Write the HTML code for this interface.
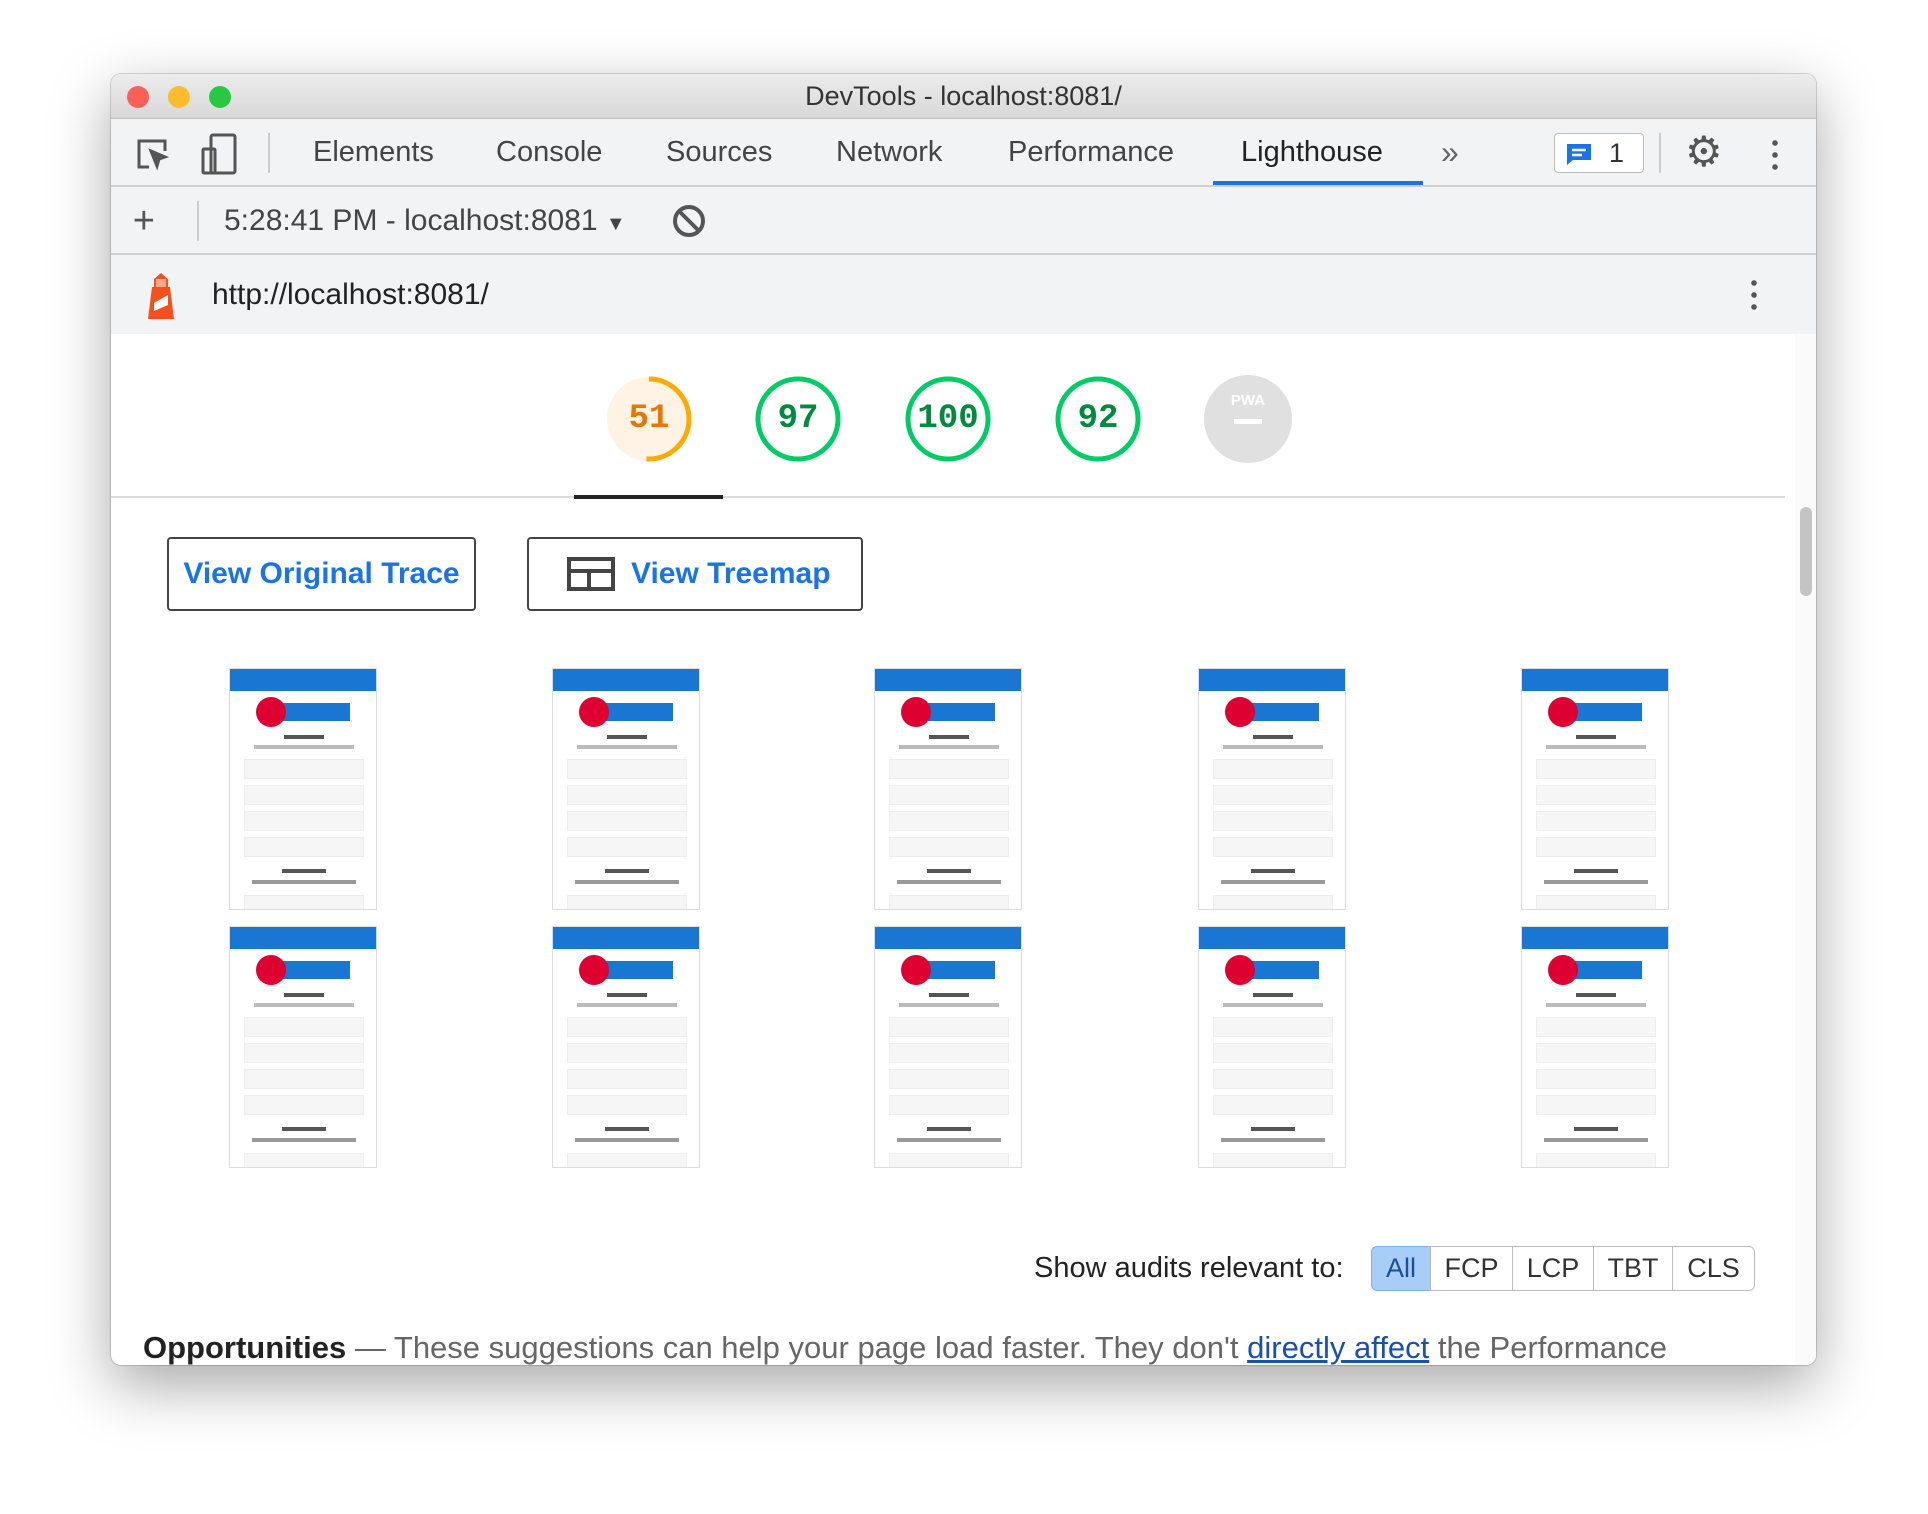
<!DOCTYPE html>
<html><head><meta charset="utf-8"><style>
*{box-sizing:border-box;margin:0;padding:0}
body{width:1928px;height:1514px;background:#fff;font-family:"Liberation Sans",sans-serif;position:relative;overflow:hidden}
.win{position:absolute;left:111px;top:74px;width:1705px;height:1291px;border-radius:10px;overflow:hidden;box-shadow:0 20px 60px rgba(0,0,0,.35),0 0 0 1px rgba(0,0,0,.15);background:#fff}
.title{position:absolute;left:0;top:0;width:100%;height:45px;background:linear-gradient(#ececec,#d8d8d8);border-bottom:1px solid #bdbdbd;text-align:center;font-size:27px;line-height:45px;color:#333}
.dot{position:absolute;top:12px;width:22px;height:22px;border-radius:50%}
.tabs{position:absolute;left:0;top:45px;width:100%;height:68px;background:#f1f3f4;border-bottom:2px solid #cfcfcf}
.tab{position:absolute;top:0;line-height:66px;font-size:29px;color:#444}
.bar2{position:absolute;left:0;top:113px;width:100%;height:68px;background:#f1f3f4;border-bottom:2px solid #cfcfcf;font-size:29px;color:#444}
.bar3{position:absolute;left:0;top:181px;width:100%;height:79px;background:#f1f3f4;font-size:29px;color:#222}
.score{position:absolute;top:301px;width:88px;height:88px}
.score svg{position:absolute;left:0;top:0}
.score span{position:absolute;left:0;top:0;width:88px;height:88px;text-align:center;font-weight:bold;font-family:"Liberation Mono",monospace;font-size:34px;line-height:88px}
.btn{position:absolute;top:463px;height:74px;border:2px solid #444;border-radius:4px;color:#1a73e8;font-weight:bold;font-size:30px;line-height:70px;text-align:center;background:#fff}
.th{position:absolute;width:148px;height:242px;background:#fff;border:1px solid #ddd;overflow:hidden}
.th .h{height:22px;background:#1976d2}
.th .r{position:absolute;left:26px;top:28px;width:30px;height:30px;border-radius:50%;background:#dd0031}
.th .b{position:absolute;left:45px;top:34px;width:75px;height:18px;background:#1976d2}
.th .l{position:absolute;left:14px;width:120px;height:20px;background:#f6f6f6;border:1px solid #eee}
.th .t{position:absolute;height:4px;background:#999}
.seg{position:absolute;top:1172px;height:45px;border:1px solid #bbb;font-size:27px;line-height:43px;text-align:center;color:#333;background:#fff}
</style></head><body>
<div class="win">
 <div class="title">DevTools - localhost:8081/
  <div class="dot" style="left:16px;background:#fc5f57"></div><div class="dot" style="left:57px;background:#fdbc2e"></div><div class="dot" style="left:98px;background:#28c840"></div>
 </div>
 <div class="tabs">
  <svg style="position:absolute;left:24px;top:18px" width="36" height="36" viewBox="0 0 36 36" fill="none" stroke="#555" stroke-width="3"><path d="M14 30H4V4h26v10"/><path d="M16 14l14 6-6 2-2 7z" fill="#555"/></svg>
  <svg style="position:absolute;left:90px;top:14px" width="36" height="42" viewBox="0 0 36 42" fill="none" stroke="#555" stroke-width="3"><rect x="10" y="2" width="24" height="38" rx="2"/><rect x="2" y="16" width="12" height="24" rx="1"/></svg>
  <div style="position:absolute;left:157px;top:14px;width:2px;height:40px;background:#ccc"></div>
  <div class="tab" style="left:202px">Elements</div>
  <div class="tab" style="left:385px">Console</div>
  <div class="tab" style="left:555px">Sources</div>
  <div class="tab" style="left:725px">Network</div>
  <div class="tab" style="left:897px">Performance</div>
  <div class="tab" style="left:1130px;color:#222">Lighthouse</div>
  <div style="position:absolute;left:1102px;top:62px;width:210px;height:4px;background:#1a73e8"></div>
  <div class="tab" style="left:1330px;font-size:32px;color:#666">»</div>
  <div style="position:absolute;left:1443px;top:14px;width:90px;height:40px;border:1px solid #bbb;border-radius:4px;background:#fff;font-size:27px;line-height:38px;color:#333"><svg style="position:absolute;left:10px;top:8px" width="28" height="24" viewBox="0 0 28 24"><path d="M2 2h24v16H8l-6 5z" fill="#1a73e8"/><path d="M7 8h14M7 13h10" stroke="#fff" stroke-width="2.5"/></svg><span style="position:absolute;left:54px">1</span></div>
  <div style="position:absolute;left:1548px;top:14px;width:2px;height:40px;background:#ccc"></div>
  <div style="position:absolute;left:1574px;top:8px;font-size:42px;color:#555">⚙</div>
  <div style="position:absolute;left:1661px;top:18px;width:6px;height:34px;background:radial-gradient(circle,#555 2.5px,transparent 3px) 0 0/6px 12px"></div>
 </div>
 <div class="bar2">
  <div style="position:absolute;left:0;top:14px;width:44px;font-size:38px;text-align:right;line-height:40px;color:#555">+</div>
  <div style="position:absolute;left:86px;top:14px;width:2px;height:40px;background:#ccc"></div>
  <div style="position:absolute;left:113px;line-height:68px;font-size:30px">5:28:41 PM - localhost:8081 <span style="font-size:20px">▼</span></div>
  <svg style="position:absolute;left:561px;top:17px" width="34" height="34" viewBox="0 0 34 34" fill="none" stroke="#555" stroke-width="4"><circle cx="17" cy="17" r="14"/><path d="M8 8l18 18"/></svg>
 </div>
 <div class="bar3">
  <svg style="position:absolute;left:34px;top:18px" width="32" height="46" viewBox="0 0 32 46"><path d="M16 0l7 6v8H9V6z" fill="#f4511e"/><rect x="11" y="6" width="10" height="8" fill="#f9a88a"/><path d="M7 14h18l4 32H3z" fill="#f4511e"/><path d="M9 30l14-8v10L9 38z" fill="#fff"/></svg>
  <div style="position:absolute;left:101px;line-height:79px;font-size:30px">http://localhost:8081/</div>
  <div style="position:absolute;left:1640px;top:22px;width:6px;height:36px;background:radial-gradient(circle,#555 2.5px,transparent 3px) 0 0/6px 12px"></div>
 </div>
 <div style="position:absolute;left:0;top:422px;width:1674px;height:2px;background:#ddd"></div>
 <div style="position:absolute;left:463px;top:421px;width:149px;height:4px;background:#222"></div>
 <div style="position:absolute;left:1684px;top:260px;width:21px;height:1031px;background:#fafafa"></div>
 <div style="position:absolute;left:1689px;top:433px;width:12px;height:89px;border-radius:6px;background:#c4c4c4"></div>

 <div class="score" style="left:494px"><svg width="88" height="88"><circle cx="44" cy="44" r="42" fill="#fff3e6"/><circle cx="44" cy="44" r="40" fill="none" stroke="#fa0" stroke-width="5" stroke-dasharray="128 300" transform="rotate(-90 44 44)"/></svg><span style="color:#e67700">51</span></div>
 <div class="score" style="left:643px"><svg width="88" height="88"><circle cx="44" cy="44" r="42" fill="#fff"/><circle cx="44" cy="44" r="40" fill="none" stroke="#0c6" stroke-width="5"/></svg><span style="color:#008a3e">97</span></div>
 <div class="score" style="left:793px"><svg width="88" height="88"><circle cx="44" cy="44" r="42" fill="#fff"/><circle cx="44" cy="44" r="40" fill="none" stroke="#0c6" stroke-width="5"/></svg><span style="color:#008a3e">100</span></div>
 <div class="score" style="left:943px"><svg width="88" height="88"><circle cx="44" cy="44" r="42" fill="#fff"/><circle cx="44" cy="44" r="40" fill="none" stroke="#0c6" stroke-width="5"/></svg><span style="color:#008a3e">92</span></div>
 <div class="score" style="left:1093px"><svg width="88" height="88"><circle cx="44" cy="44" r="44" fill="#e0e0e0"/><text x="44" y="30" font-size="15" font-family="Liberation Sans" fill="#fff" text-anchor="middle" font-weight="bold">PWA</text><rect x="30" y="44" width="28" height="5" fill="#fff"/></svg></div>

 <div class="btn" style="left:56px;width:309px">View Original Trace</div>
 <div class="btn" style="left:416px;width:336px"><svg style="position:absolute;left:38px;top:18px" width="48" height="34" viewBox="0 0 48 34" fill="none" stroke="#444" stroke-width="4"><rect x="2" y="2" width="44" height="30"/><path d="M2 14h44M22 14v18"/></svg><span style="position:absolute;left:102px">View Treemap</span></div>

 <div id="thumbs"></div>

 <div style="position:absolute;left:923px;top:1172px;font-size:29px;line-height:45px;color:#222">Show audits relevant to:</div>
 <div class="seg" style="left:1260px;width:60px;background:#a8cdf7;border-color:#7fb0ec;color:#1a4f9c;border-radius:6px 0 0 6px">All</div>
 <div class="seg" style="left:1319px;width:83px">FCP</div>
 <div class="seg" style="left:1401px;width:82px">LCP</div>
 <div class="seg" style="left:1482px;width:80px">TBT</div>
 <div class="seg" style="left:1561px;width:83px;border-radius:0 6px 6px 0">CLS</div>

 <div style="position:absolute;left:32px;top:1256px;font-size:31px;line-height:36px;color:#666;white-space:nowrap"><b style="color:#222">Opportunities</b> — These suggestions can help your page load faster. They don't <u style="color:#1a4fb0">directly affect</u> the Performance</div>
</div>
<script>
var xs=[118,441,763,1087,1410],ys=[594,852],h='';
ys.forEach(function(y){xs.forEach(function(x){
h+='<div class="th" style="left:'+x+'px;top:'+y+'px"><div class="h"></div><div class="b"></div><div class="r"></div>'+
'<div class="t" style="left:54px;top:66px;width:40px;background:#555"></div><div class="t" style="left:24px;top:76px;width:100px;background:#bbb"></div>'+
'<div class="l" style="top:90px"></div><div class="l" style="top:116px"></div><div class="l" style="top:142px"></div><div class="l" style="top:168px"></div>'+
'<div class="t" style="left:52px;top:200px;width:44px;background:#555"></div><div class="t" style="left:22px;top:211px;width:104px;background:#999"></div><div class="l" style="top:226px"></div></div>';
});});
document.getElementById('thumbs').innerHTML=h;
</script>
</body></html>
